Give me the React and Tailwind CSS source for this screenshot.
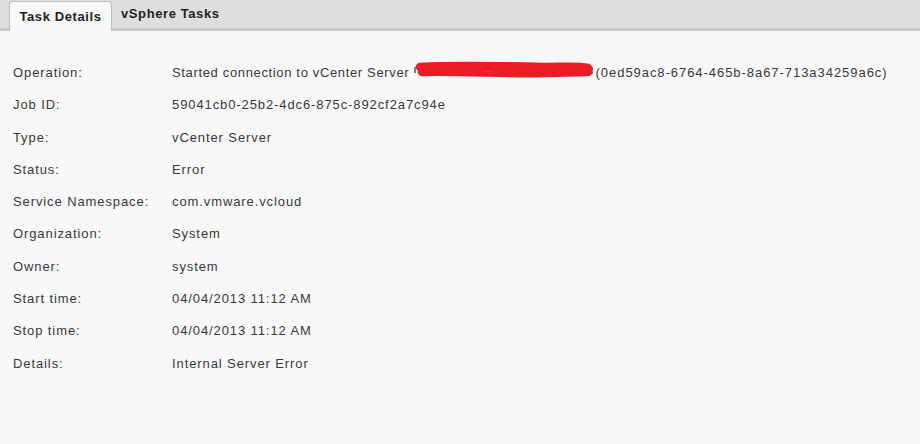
import React from 'react';

// ── Données ──────────────────────────────────────────────

const ROWS = [
  { label: 'Operation:', value: 'op' },
  { label: 'Job ID:', value: '59041cb0-25b2-4dc6-875c-892cf2a7c94e' },
  { label: 'Type:', value: 'vCenter Server' },
  { label: 'Status:', value: 'Error' },
  { label: 'Service Namespace:', value: 'com.vmware.vcloud' },
  { label: 'Organization:', value: 'System' },
  { label: 'Owner:', value: 'system' },
  { label: 'Start time:', value: '04/04/2013 11:12 AM' },
  { label: 'Stop time:', value: '04/04/2013 11:12 AM' },
  { label: 'Details:', value: 'Internal Server Error' },
];

const Redaction = () => (
  <svg width="182" height="18" viewBox="0 0 182 18" className="shrink-0 -mt-[2px]">
    <path d="M1 6 l0 6" stroke="#555" strokeWidth="1.5" />
    <path d="M178 6 l0 7" stroke="#555" strokeWidth="1.5" />
    <path d="M6 6 C40 4 90 5 130 6 C150 6 165 5 174 7 M8 11 C50 10 90 13 130 12 C150 12 165 11 174 11"
      stroke="#ec1c24" strokeWidth="8.5" strokeLinecap="round" fill="none" />
    <path d="M68 10 l12 1" stroke="#b05050" strokeWidth="1" />
  </svg>
);

export default function App() {
  return (
    <div className="w-[920px] h-[444px] bg-[#f8f8f8] flex flex-col text-[13px] tracking-[0.9px] text-[#383838]"
         style={{ fontFamily: '"Liberation Sans", Arial, sans-serif' }}>

      {/* Onglets */}
      <div className="h-[31px] bg-[#dedede] border-b-[3px] border-[#c8c8c8] flex items-end pl-[9px] shrink-0">
        <div className="h-[30px] -mb-[3px] w-[103px] bg-[#f8f8f8] border border-b-0 border-[#bdbdbd] rounded-t-[4px] flex items-center justify-center font-bold tracking-[0.6px] text-[#222]">
          Task Details
        </div>
        <div className="h-[28px] pl-[9px] flex items-center font-bold tracking-[0.6px] text-[#222]">
          vSphere Tasks
        </div>
      </div>

      {/* Détails */}
      <div className="pt-[32px] pl-[13px] flex flex-col">
        {ROWS.map(r => (
          <div key={r.label} className="h-[32.3px] flex items-start">
            <span className="w-[159px] shrink-0">{r.label}</span>
            {r.value === 'op' ? (
              <span className="flex items-start whitespace-nowrap">
                <span className="tracking-[0.65px]">Started connection to vCenter Server&nbsp;</span>
                <Redaction />
                <span className="tracking-[0.95px]">(0ed59ac8-6764-465b-8a67-713a34259a6c)</span>
              </span>
            ) : (
              <span>{r.value}</span>
            )}
          </div>
        ))}
      </div>
    </div>
  );
}
